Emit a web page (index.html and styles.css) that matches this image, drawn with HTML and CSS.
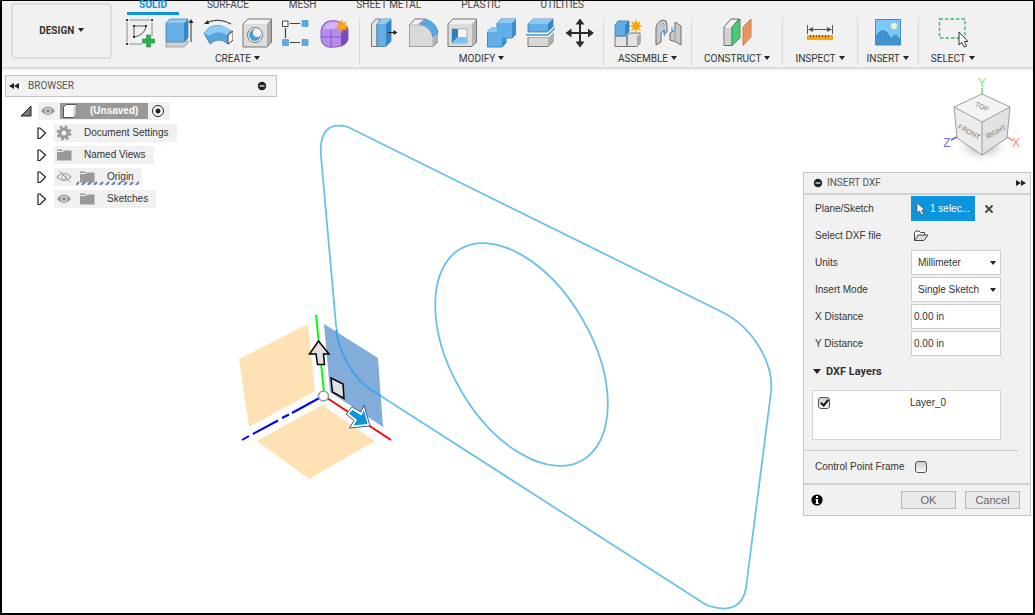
FILE: index.html
```html
<!DOCTYPE html>
<html lang="en">
<head>
    <meta charset="UTF-8">
    <meta name="viewport" content="width=device-width, initial-scale=1.0">
    <title>Insert DXF</title>
    <link rel="stylesheet" href="styles.css">
</head>
<body>
    <div class="app">
        <header class="ribbon">
            <button class="workspace-button">DESIGN <span class="caret"></span></button>
            <div class="ribbon-main">
                <nav class="tabs">
                    <a class="tab active" href="#">SOLID</a>
                    <a class="tab" href="#">SURFACE</a>
                    <a class="tab" href="#">MESH</a>
                    <a class="tab" href="#">SHEET METAL</a>
                    <a class="tab" href="#">PLASTIC</a>
                    <a class="tab" href="#">UTILITIES</a>
                </nav>
                <div class="groups">
                    <div class="group">
                        <div class="tools">
                            <!-- sketch -->
                            <button class="tool"><svg viewBox="0 0 30 30">
                                <path d="M4 2H25M4 26H17M2 4V24M27 4V18" stroke="#8a8a8a" fill="none"/>
                                <path d="M9 8H21M9 8V19M21 8Q20 17 9 19" stroke="#555" fill="none"/>
                                <path d="M1 1h2v2H1zM26 1h2v2h-2zM1 25h2v2H1zM8 7h2v2H8zM20 7h2v2h-2zM8 18h2v2H8z" fill="#333"/>
                                <path d="M21.5 17h4v4h4v4h-4v4h-4v-4h-4v-4h4z" fill="#25b04b" stroke="#159038" stroke-width=".6"/>
                            </svg></button>
                            <!-- extrude -->
                            <button class="tool"><svg viewBox="0 0 30 30">
                                <path d="M2 25L4 23H24V25L20 29H2z" fill="#cfcfcf" stroke="#888" stroke-width=".7"/>
                                <path d="M2 5L6 1H24L20 5z" fill="#8ecbf5"/>
                                <path d="M20 5L24 1V20L20 24z" fill="#3587c4"/>
                                <path d="M2 5H20V24H2z" fill="#65aee6"/>
                                <path d="M2 5L6 1H24V20L20 24H2z" fill="none" stroke="#4284b5" stroke-width=".8"/>
                                <path d="M27 4V24" stroke="#333"/><path d="M27 1l2.5 4h-5z" fill="#222"/>
                            </svg></button>
                            <!-- revolve -->
                            <button class="tool"><svg viewBox="0 0 30 30">
                                <path d="M3 5Q15 -1 28 6" stroke="#333" fill="none" stroke-width="1.2"/><path d="M1 6l4-4 1 4z" fill="#222"/>
                                <path d="M1 15L7 9Q16 5 25 11L30 14V22L25 26Q16 18 7 26z" fill="#57a5e0" stroke="#3f7ba8" stroke-width=".8"/>
                                <path d="M1 15L7 9Q16 5 28 12L24 17Q15 11 6 18z" fill="#8ecbf5"/>
                                <path d="M25 17L30 13V22L25 26z" fill="#fff" stroke="#444"/>
                            </svg></button>
                            <!-- hole -->
                            <button class="tool"><svg viewBox="0 0 30 30">
                                <path d="M1 6L6 1H29.5L25 6z" fill="#f2f2f2"/><path d="M25 6L29.5 1V24L25 29z" fill="#aaa"/>
                                <path d="M1 6H25V29H1z" fill="#dcdcdc"/>
                                <path d="M1 6L6 1H29.5V24L25 29H1z" fill="none" stroke="#777"/>
                                <circle cx="13" cy="17" r="7.5" fill="#f4f4f4" stroke="#777"/>
                                <circle cx="13" cy="17" r="5.5" fill="#4a9edb" stroke="#3f7ba8" stroke-width=".6"/>
                                <circle cx="15" cy="15" r="4" fill="#f4f4f4"/>
                            </svg></button>
                            <!-- pattern -->
                            <button class="tool"><svg viewBox="0 0 30 30">
                                <path d="M9 5.5H19M9 24.5H19M4.5 10V20" stroke="#444" stroke-width="1.2"/>
                                <path d="M1.5 3h5.500v5.500H1.500z" fill="#fff" stroke="#444"/>
                                <path d="M21 2.5h6v6h-6zM1.500 21.500h6v6h-6zM21 21.500h6v6h-6z" fill="#5aaae4" stroke="#3f8dc4" stroke-width=".6"/>
                            </svg></button>
                            <!-- form -->
                            <button class="tool"><svg viewBox="0 0 30 30">
                                <path d="M1 13Q1 8 5 5Q8 2 17 3Q25 5 28 11V21Q27 26 21 28Q8 31 4 27Q1 25 1 20z" fill="#b48ceb" stroke="#8458c0"/>
                                <path d="M21 12Q26 9 28 11V21Q27 26 21 28z" fill="#7a4cba"/>
                                <path d="M5 8Q8 3 17 4L20 9Q12 12 3 11z" fill="#d0b4f6"/>
                                <path d="M2 19H21L28 15M11 12V29" stroke="#7a4cb8" stroke-width=".8" fill="none"/>
                                <path d="M22 1l1.3 4 3.7-2-2 3.7 4 1.3-4 1.3 2 3.7-3.7-2-1.3 4-1.3-4-3.7 2 2-3.7-4-1.3 4-1.3-2-3.7 3.7 2z" fill="#f9a60a"/>
                            </svg></button>
                        </div>
                        <button class="group-label">CREATE<span class="caret"></span></button>
                    </div>
                    <div class="group">
                        <div class="tools">
                            <!-- press pull -->
                            <button class="tool"><svg viewBox="0 0 30 30">
                                <path d="M2.5 6L7 1H12L8 6V28.500H2.500z" fill="#e4e4e4" stroke="#777"/>
                                <path d="M8 6L13 1H22V23L17 28.500H8z" fill="#65aee6" stroke="#3f7ba8" stroke-width=".8"/>
                                <path d="M17 6L22 1V23L17 28z" fill="#3587c4"/><path d="M8 6L13 1H22L17 6z" fill="#8ecbf5"/>
                                <path d="M19 14.5H26" stroke="#222" stroke-width="1.2"/><path d="M28.5 14.500L24.500 12v5z" fill="#222"/>
                            </svg></button>
                            <!-- fillet -->
                            <button class="tool"><svg viewBox="0 0 30 30">
                                <path d="M1.5 7L7 1H17Q30 6 30 17V24L25 28.500H1.500z" fill="#f0f0f0" stroke="#777"/>
                                <path d="M1.5 7H11Q24 8 25 20V28.500H1.500z" fill="#d9d9d9" stroke="#999" stroke-width=".6"/>
                                <path d="M25 20L30 16V24L25 28.5z" fill="#b0b0b0"/>
                                <path d="M11 6L17 1Q29 4 29.5 16L25 19Q23 8 11 6z" fill="#57a8e4" stroke="#3f8dc4" stroke-width=".6"/>
                            </svg></button>
                            <!-- shell -->
                            <button class="tool"><svg viewBox="0 0 30 30">
                                <path d="M1 6L6 1H29.5V24L25 28.500H1z" fill="#f0f0f0"/><path d="M25 6L29.5 1V24L25 28.500z" fill="#b5b5b5"/>
                                <path d="M1 6H25V28.5H1z" fill="#dcdcdc"/><path d="M1 6L6 1H29.5V24L25 28.500H1z" fill="none" stroke="#777"/>
                                <path d="M5 11H20V25H5z" fill="#f7f7f7" stroke="#888" stroke-width=".6"/>
                                <path d="M5 11L11 11V19L5 25z" fill="#2f7fb8"/><path d="M5 25L11 19H20V25z" fill="#7cc4f5"/>
                            </svg></button>
                            <!-- combine -->
                            <button class="tool"><svg viewBox="0 0 30 30">
                                <path d="M1.5 14L5 10H11V5L15 1H30V16L26 20H20V25L16 29H1.500z" fill="#62aee8" stroke="#3f8dc4"/>
                                <path d="M26 5L30 1V16L26 20zM16 20H20V25L16 29V20z" fill="#3a8fd0"/>
                                <path d="M11 5L15 1H30L26 5zM1.5 14L5 10H11V14z" fill="#8acaf5"/>
                            </svg></button>
                            <!-- split -->
                            <button class="tool"><svg viewBox="0 0 30 30">
                                <path d="M3 19H23L28 14V24L23 28.5H3z" fill="#d8d8d8" stroke="#777"/><path d="M23 20L28 15V24L23 28z" fill="#b0b0b0"/>
                                <path d="M3 6L8 1H28V10L23 14H3z" fill="#62aee8" stroke="#3f7ba8" stroke-width=".8"/>
                                <path d="M3 6L8 1H28L23 6z" fill="#8acaf5"/><path d="M23 6L28 1V10L23 14z" fill="#3587c4"/>
                                <path d="M1 17H23L30 10" stroke="#fff" stroke-width="4" fill="none"/><path d="M1 17H23L30 10" stroke="#3a95d8" stroke-width="1.5" fill="none"/>
                            </svg></button>
                            <!-- move -->
                            <button class="tool"><svg viewBox="0 0 30 30">
                                <path d="M16 4V26M5 15H27" stroke="#2b2b2b" stroke-width="2"/>
                                <path d="M16 .5l4.500 6h-9zM16 29.500l4.500-6h-9zM1.500 15l6-4.500v9zM30 15l-6-4.500v9z" fill="#2b2b2b"/>
                            </svg></button>
                        </div>
                        <button class="group-label">MODIFY<span class="caret"></span></button>
                    </div>
                    <div class="group">
                        <div class="tools">
                            <!-- new component -->
                            <button class="tool"><svg viewBox="0 0 30 30">
                                <path d="M2 18H14V28.5H2zM14 18L17 15H27V25L24 28.500H14z" fill="#e2e2e2" stroke="#777"/>
                                <path d="M24 19L27 16V25L24 28z" fill="#aaa"/>
                                <path d="M2 7L5 3H16V14L12 18H2z" fill="#5fade8" stroke="#3f7ba8" stroke-width=".8"/><path d="M12 7L16 3V14L12 18z" fill="#3587c4"/>
                                <path d="M23 1l1.3 4 3.7-2-2 3.7 4 1.3-4 1.3 2 3.7-3.7-2-1.3 4-1.3-4-3.7 2 2-3.7-4-1.3 4-1.3-2-3.7 3.7 2z" fill="#f9a60a"/>
                            </svg></button>
                            <!-- joint -->
                            <button class="tool"><svg viewBox="0 0 30 30">
                                <path d="M4 9Q6 3 11 2Q15 2 15 6V14L12 16V12L9 15V24L4 27z" fill="#c9c9c9" stroke="#6d6d6d"/>
                                <circle cx="11" cy="6.5" r="1.2" fill="#f1f1f1" stroke="#777" stroke-width=".6"/>
                                <path d="M18 15L23 12V4L29 8V27L24 24L18 22z" fill="#c9c9c9" stroke="#6d6d6d"/><path d="M23 12V23" stroke="#999"/>
                                <path d="M12.5 12V18M20 9V14" stroke="#3ba0e8" stroke-width="1.2"/>
                            </svg></button>
                        </div>
                        <button class="group-label">ASSEMBLE<span class="caret"></span></button>
                    </div>
                    <div class="group single">
                        <div class="tools">
                            <!-- offset plane -->
                            <button class="tool"><svg viewBox="0 0 30 30">
                                <path d="M2 9L9 1H17L10 9V27.5H2z" fill="#f4f4f4" stroke="#666"/><path d="M3 9.5H9V27H3z" fill="#d2d2d2"/>
                                <path d="M10 9L18 1V20L10 27.5z" fill="#52c77c" stroke="#2d9e55"/>
                                <path d="M21 9L29 1V19L21 27.5z" fill="#e8945a" stroke="#c88050"/>
                            </svg></button>
                        </div>
                        <button class="group-label">CONSTRUCT<span class="caret"></span></button>
                    </div>
                    <div class="group single">
                        <div class="tools">
                            <!-- measure -->
                            <button class="tool"><svg viewBox="0 0 30 30">
                                <path d="M2.5 7V16M27.500 7V16M4 11.500H26" stroke="#555"/><path d="M3 11.5l5-2.500v5zM27 11.500l-5-2.500v5z" fill="#555"/>
                                <path d="M2 17H28V22H2z" fill="#fba70c"/><path d="M5.5 17v2M8.500 17v3M11.500 17v2M14.500 17v3M17.500 17v2M20.500 17v3M23.500 17v2" stroke="#7a5515"/>
                            </svg></button>
                        </div>
                        <button class="group-label">INSPECT<span class="caret"></span></button>
                    </div>
                    <div class="group">
                        <div class="tools">
                            <!-- image -->
                            <button class="tool"><svg viewBox="0 0 30 30">
                                <path d="M2.5 1.500H27.500V27H2.500z" fill="#7cc8fa"/>
                                <path d="M2.5 18Q6 12 10 12Q14 12 18 20Q22 14 25 18L27.500 22V27H2.500z" fill="#3f93cf"/>
                                <circle cx="21" cy="8" r="3" fill="#fdf3c0"/><path d="M2.5 1.500H27.500V27H2.500z" fill="none" stroke="#3f8dc4"/>
                            </svg></button>
                        </div>
                        <button class="group-label">INSERT<span class="caret"></span></button>
                    </div>
                    <div class="group single">
                        <div class="tools">
                            <!-- window select -->
                            <button class="tool"><svg viewBox="0 0 30 30">
                                <path d="M1.5 1H27V20H1.500z" fill="none" stroke="#3dba63" stroke-width="1.4" stroke-dasharray="3.5 2"/>
                                <path d="M21 14V27L24 24.5L26 29L28.500 28L26.500 23.500H30z" fill="#fff" stroke="#333"/>
                            </svg></button>
                        </div>
                        <button class="group-label">SELECT<span class="caret"></span></button>
                    </div>
                </div>
            </div>
        </header>

        <main class="workspace">
            <svg class="canvas" width="1031" height="542" viewBox="2 71 1031 542">
                <!-- origin planes -->
                <path d="M239 359L308 324L315 391L249 427zM257 441L322 405L375 441L309 479z" fill="#fee2b3"/>
                <path d="M324 324L378 358L383 427L330 392z" fill="#82add8"/>
                <!-- dxf outline -->
                <g fill="none" stroke="#6cc1e9" stroke-width="1.8">
                    <path d="M321 156C319 131 329 122 348 127L722 312C754 328 774 364 771 392L746 588C743 605 732 613 709 606Q704 604 694 597L373 391C351 378 339 350 336 325z"/>
                    <ellipse cx="521.5" cy="354.5" rx="122" ry="70.5" transform="rotate(60 521.5 354.5)"/>
                </g>
                <path d="M336 330C339 350 351 378 373 391L381 396" fill="none" stroke="#3f9fec" stroke-width="1.8"/>
                <!-- axes -->
                <g fill="none" stroke-width="2">
                    <path d="M316 315L324 392" stroke="#0f0"/>
                    <path d="M324 396L391 440" stroke="#f00"/>
                    <path d="M323 396L292 413M289 414.5L282 418M278 420.5L253 434M249 436L242 440" stroke="#00f"/>
                </g>
                <path d="M318.5 341L329 354H323.5L324.5 364.5H317.5L316 354H309.500z" fill="#e0e0e0" stroke="#000" stroke-width="1.5"/>
                <path d="M331 378L343 384L344 398.5L332.5 392z" fill="#e0e0e0" stroke="#000" stroke-width="1.5"/>
                <path d="M346 414L352 407L361 412L364 405L370 426L349.5 428L354 420.5z" fill="#fff" stroke="#3f5f88"/>
                <path d="M349 413.5L352.5 410L361.5 415.5L364 410L367.5 424L353.5 425.5L357 420z" fill="#0c94dc"/>
                <circle cx="323.5" cy="396" r="5" fill="#fff" stroke="#999" stroke-width="1.5"/>
            </svg>

            <section class="browser">
                <div class="browser-header">
                    <svg class="icon-small" viewBox="0 0 10 10"><path d="M5 2v6L0 5zM10 2v6L5 5z" fill="#222"/></svg>
                    <span class="panel-title">BROWSER</span>
                    <svg class="icon-small" viewBox="0 0 10 10"><circle cx="5" cy="5" r="4.2" fill="#222"/><path d="M2.5 5h5" stroke="#fff" stroke-width="1.2"/></svg>
                </div>
                <div class="tree">
                    <div class="tree-row root">
                        <svg class="arrow" viewBox="0 0 12 12"><path d="M1 11L11 1V11z" fill="#777" stroke="#222"/></svg>
                        <div class="chip">
                            <svg class="icon" viewBox="0 0 16 16"><use href="#eye"/></svg>
                            <span class="selected">
                                <svg class="icon" viewBox="0 0 16 16"><path d="M1.5 4L4 1.500H14.500V11L11.500 14.500H1.500z" fill="#fff" stroke="#555"/><path d="M11.5 4.500L14.500 1.500V11L11.500 14.500z" fill="#ccc"/></svg>
                                (Unsaved)
                            </span>
                            <input class="activate" type="radio" aria-label="Activate" checked>
                        </div>
                    </div>
                    <div class="tree-row">
                        <svg class="arrow" viewBox="0 0 12 12"><use href="#expand"/></svg>
                        <div class="chip">
                            <svg class="icon" viewBox="0 0 16 16"><circle cx="8" cy="8" r="4" fill="none" stroke="#999" stroke-width="3"/><circle cx="8" cy="8" r="6.2" fill="none" stroke="#999" stroke-width="2.5" stroke-dasharray="2.6 2.27"/></svg>
                            <span class="name">Document Settings</span>
                        </div>
                    </div>
                    <div class="tree-row">
                        <svg class="arrow" viewBox="0 0 12 12"><use href="#expand"/></svg>
                        <div class="chip">
                            <svg class="icon" viewBox="0 0 16 16"><use href="#folder"/></svg>
                            <span class="name">Named Views</span>
                        </div>
                    </div>
                    <div class="tree-row">
                        <svg class="arrow" viewBox="0 0 12 12"><use href="#expand"/></svg>
                        <div class="chip origin">
                            <svg class="icon" viewBox="0 0 16 16"><path d="M1 8Q8 0 15 8Q8 15 1 8z" fill="none" stroke="#aaa" stroke-width="1.2"/><circle cx="8" cy="8" r="2.5" fill="none" stroke="#aaa"/><path d="M3 2L14 13" stroke="#999"/></svg>
                            <svg class="icon" viewBox="0 0 16 16"><use href="#folder"/></svg>
                            <span class="name">Origin</span>
                            <svg class="hatch" viewBox="0 0 64 4"><path d="M0 4l3-3M6 4l3-3M12 4l3-3M18 4l3-3M24 4l3-3M30 4l3-3M36 4l3-3M42 4l3-3M48 4l3-3M54 4l3-3M60 4l3-3" stroke="#5f7fb0" stroke-width="1.8"/></svg>
                        </div>
                    </div>
                    <div class="tree-row">
                        <svg class="arrow" viewBox="0 0 12 12"><use href="#expand"/></svg>
                        <div class="chip">
                            <svg class="icon" viewBox="0 0 16 16"><use href="#eye"/></svg>
                            <svg class="icon" viewBox="0 0 16 16"><use href="#folder"/></svg>
                            <span class="name">Sketches</span>
                        </div>
                    </div>
                </div>
            </section>

            <div class="side">
                <svg class="viewcube" viewBox="931 71 100 101">
                    <defs><radialGradient id="shade"><stop offset="0" stop-color="#999"/><stop offset="1" stop-color="#fff" stop-opacity="0"/></radialGradient></defs>
                    <ellipse cx="982" cy="147" rx="29" ry="16" fill="url(#shade)"/>
                    <path d="M982 94V88" stroke="#5ee65e" stroke-width="1.5"/>
                    <path d="M957 137L951 140" stroke="#5a5af0" stroke-width="1.5"/>
                    <path d="M1007 137L1013 141" stroke="#f08080" stroke-width="1.5"/>
                    <path d="M982 94L1010 107L982 122L954 107z" fill="#f3f3f3"/>
                    <path d="M954 107L982 122V155L957 138z" fill="#ececec"/>
                    <path d="M1010 107L982 122V155L1007 138z" fill="#e2e2e2"/>
                    <path d="M982 94L1010 107L1007 138L982 155L957 138L954 107zM954 107L982 122L1010 107M982 122V155" fill="none" stroke="#888" stroke-width=".8"/>
                    <text class="axis" x="982" y="87" fill="#7be87b">Y</text>
                    <text class="axis" x="947" y="147" fill="#7070f0">Z</text>
                    <text class="axis" x="1016" y="147" fill="#f28a8a">X</text>
                    <text class="face" transform="translate(981 109) rotate(24)">TOP</text>
                    <text class="face" transform="translate(968 134) rotate(28)">FRONT</text>
                    <text class="face" transform="translate(997 134) rotate(-28)">RIGHT</text>
                </svg>

                <form class="dialog">
                    <div class="dialog-header">
                        <svg class="icon-small" viewBox="0 0 10 10"><circle cx="5" cy="5" r="4.2" fill="#222"/><path d="M2.5 5h5" stroke="#fff" stroke-width="1.2"/></svg>
                        <span class="panel-title">INSERT DXF</span>
                        <svg class="icon-small" viewBox="0 0 10 10"><path d="M0 2v6l5-3zM5 2v6l5-3z" fill="#222"/></svg>
                    </div>
                    <div class="fields">
                        <div class="field">
                            <label for="plane">Plane/Sketch</label>
                            <button type="button" id="plane" class="select-plane">
                                <svg viewBox="0 0 10 14"><path d="M1 1V11L3.5 9L5.500 13L7.500 12L5.500 8H9z" fill="#fff" stroke="#555" stroke-width=".8"/></svg>
                                1 selec...
                            </button>
                            <button type="button" class="clear" aria-label="Clear"><svg viewBox="0 0 10 10"><path d="M1.5 1.500l7 7M8.500 1.500l-7 7" stroke="#444" stroke-width="1.8"/></svg></button>
                        </div>
                        <div class="field">
                            <label for="file">Select DXF file</label>
                            <button type="button" id="file" class="open-file"><svg viewBox="0 0 16 12"><path d="M1.5 10.500V2.500L3 1H6L7.500 2.500H11.500V5" fill="#fff" stroke="#444"/><path d="M1.5 10.500L5 5H15L11 10.500z" fill="#ddd" stroke="#444"/></svg></button>
                        </div>
                        <div class="field">
                            <label for="units">Units</label>
                            <span class="dropdown"><select id="units"><option>Millimeter</option></select></span>
                        </div>
                        <div class="field">
                            <label for="mode">Insert Mode</label>
                            <span class="dropdown"><select id="mode"><option>Single Sketch</option></select></span>
                        </div>
                        <div class="field">
                            <label for="x-distance">X Distance</label>
                            <input type="text" id="x-distance" value="0.00 in">
                        </div>
                        <div class="field">
                            <label for="y-distance">Y Distance</label>
                            <input type="text" id="y-distance" value="0.00 in">
                        </div>
                    </div>
                    <h2><span class="caret"></span>DXF Layers</h2>
                    <div class="layers">
                        <input type="checkbox" id="layer0" checked>
                        <label for="layer0">Layer_0</label>
                    </div>
                    <div class="frame-row">
                        <label for="frame">Control Point Frame</label>
                        <input type="checkbox" id="frame">
                    </div>
                    <div class="dialog-footer">
                        <svg class="info" viewBox="0 0 12 12"><circle cx="6" cy="6" r="5.6" fill="#000"/><path d="M5 2h2v2H5zM4.5 5H7v4h1v1H4.500V9H5V6h-.5z" fill="#fff"/></svg>
                        <button type="button">OK</button>
                        <button type="button">Cancel</button>
                    </div>
                </form>
            </div>
        </main>
    </div>

    <svg class="symbols" width="0" height="0">
        <symbol id="eye" viewBox="0 0 16 16"><path d="M1 8Q8 -1 15 8Q8 16 1 8z" fill="#999"/><circle cx="8" cy="8" r="3" fill="#f1f1f1"/><circle cx="8" cy="8" r="2" fill="#888"/></symbol>
        <symbol id="folder" viewBox="0 0 16 16"><path d="M1 2.5H6L7 4H1zM1 5H7L8 3.500H15.500V13.500H1z" fill="#999"/></symbol>
        <symbol id="expand" viewBox="0 0 12 12"><path d="M2 1H4L9.5 6L4 11.500H2z" fill="#fff" stroke="#222" stroke-width="1.2"/></symbol>
    </svg>
</body>
</html>
```

FILE: styles.css
```css
* {
    box-sizing: border-box;
}
body {
    margin: 0;
    font-family: 'Liberation Sans', Arial, sans-serif;
    font-size: 10px;
    line-height: 12px;
    color: #333;
    background: #fff;
}
button, input, select {
    font: inherit;
    color: inherit;
    margin: 0;
}
button {
    padding: 0;
    border: none;
    background: none;
    cursor: pointer;
}
svg {
    display: block;
    flex-shrink: 0;
}
.app {
    display: flex;
    flex-direction: column;
    min-height: 100vh;
    border: 2px solid #000;
    border-top-width: 1px;
}
.symbols {
    position: absolute;
}
.caret {
    display: inline-block;
    border: 3px solid transparent;
    border-top: 4px solid #222;
    border-bottom: none;
    margin-left: 3px;
    vertical-align: 2px;
}

/* ribbon */
.ribbon {
    display: flex;
    gap: 13px;
    padding: 0 9px 2px;
    background: #f1f1f1;
    border-bottom: 2px solid #dedede;
    box-shadow: 0 2px 0 #f5f5f5;
    margin-bottom: 2px;
    font-family: Roboto, sans-serif;
}
.workspace-button {
    width: 101px;
    height: 56px;
    margin-top: 2px;
    border: 2px solid #dcdcdc;
    border-radius: 4px;
    font-weight: bold;
    flex-shrink: 0;
}
.workspace-button .caret {
    margin-left: 1px;
}
.tabs {
    display: flex;
    gap: 16px;
    height: 14px;
    margin-left: 2px;
    line-height: 7px;
}
.tab {
    padding: 0 12px;
    color: #444;
    text-decoration: none;
    white-space: nowrap;
}
.tab.active {
    color: #0c94dc;
    font-weight: bold;
    border-bottom: 3px solid #0c94dc;
}
.groups {
    display: flex;
    padding-top: 3px;
}
.group {
    display: flex;
    flex-direction: column;
    align-items: center;
    gap: 5px;
    padding: 0 9px;
    border-right: 1px solid #d8d8d8;
}
.group.single {
    padding: 0 12px;
}
.group:first-child {
    padding-left: 0;
}
.group:last-child {
    border-right: none;
}
.tools {
    display: flex;
    gap: 9px;
}
.tool, .tool svg {
    width: 30px;
    height: 30px;
}
.group-label {
    white-space: nowrap;
}

/* canvas */
.workspace {
    position: relative;
    flex: 1;
    display: flex;
    justify-content: space-between;
    align-items: flex-start;
}
.canvas {
    position: absolute;
    top: 0;
    left: 0;
}
.panel-title {
    flex: 1;
    font-family: Roboto, sans-serif;
    color: #555;
}
.icon-small {
    width: 10px;
    height: 10px;
}

/* browser */
.browser {
    position: relative;
    width: 272px;
    margin: 4px 0 0 3px;
}
.browser-header {
    display: flex;
    align-items: center;
    gap: 9px;
    height: 22px;
    padding: 0 9px 0 3px;
    background: #f2f2f2;
    border: 1px solid #c4c4c4;
}
.tree {
    padding-top: 3px;
}
.tree-row {
    display: flex;
    align-items: center;
    gap: 6px;
    height: 22px;
    padding-left: 31px;
}
.tree-row.root {
    padding-left: 15px;
}
.arrow {
    width: 12px;
    height: 12px;
}
.chip {
    position: relative;
    display: flex;
    align-items: center;
    gap: 7px;
    height: 18px;
    padding: 0 8px 0 2px;
    background: #f1f1f1;
}
.root .chip {
    gap: 4px;
    padding-right: 6px;
}
.icon {
    width: 16px;
    height: 16px;
}
.name {
    padding-left: 5px;
}
.selected {
    display: flex;
    align-items: center;
    gap: 12px;
    height: 16px;
    padding: 0 10px 0 2px;
    background: #999;
    color: #fff;
    font-weight: bold;
}
.activate {
    appearance: none;
    width: 12px;
    height: 12px;
    border: 1px solid #222;
    border-radius: 50%;
    background: radial-gradient(circle, #222 2px, #fff 3px);
}
.hatch {
    position: absolute;
    left: 22px;
    bottom: 1px;
    width: 64px;
    height: 4px;
}

/* dialog */
.side {
    position: relative;
    display: flex;
    flex-direction: column;
    align-items: flex-end;
    width: 228px;
    margin-right: 2px;
}
.viewcube {
    width: 100px;
    height: 101px;
}
.axis {
    font-size: 12px;
    text-anchor: middle;
}
.face {
    font-size: 7px;
    fill: #777;
    text-anchor: middle;
}
.dialog {
    width: 100%;
    background: #f1f1f1;
    border: 1px solid #c8c8c8;
}
.dialog-header {
    display: flex;
    align-items: center;
    gap: 4px;
    height: 22px;
    padding: 0 4px 0 9px;
    border-bottom: 2px solid #d2d2d2;
}
.fields {
    padding-left: 11px;
}
.field {
    display: flex;
    align-items: center;
    height: 27px;
}
.field label {
    width: 96px;
}
.field input, .field select {
    width: 90px;
    height: 25px;
    padding: 0 2px;
    border: 1px solid #ccc;
    border-radius: 0;
    background: #fff;
}
.field select {
    appearance: none;
    padding: 0 6px;
}
.dropdown {
    position: relative;
}
.dropdown::after {
    content: '';
    position: absolute;
    right: 5px;
    top: 11px;
    border: 3px solid transparent;
    border-top: 4px solid #222;
    border-bottom: none;
    pointer-events: none;
}
.select-plane {
    display: flex;
    align-items: center;
    justify-content: center;
    gap: 4px;
    width: 64px;
    height: 25px;
    background: #0c94dc;
    color: #fff;
}
.select-plane svg {
    width: 10px;
    height: 14px;
}
.clear {
    margin-left: 9px;
}
.clear svg {
    width: 10px;
    height: 10px;
}
.open-file {
    margin-left: 2px;
}
.open-file svg {
    width: 16px;
    height: 12px;
}
.dialog h2 {
    margin: 0;
    padding: 8px 9px 6px;
    font-family: Roboto, sans-serif;
    font-size: 11px;
    line-height: 14px;
}
.dialog h2 .caret {
    margin: 0 5px 0 0;
    border-width: 5px 4px 0;
    vertical-align: 1px;
}
.layers {
    display: flex;
    align-items: flex-start;
    gap: 80px;
    height: 50px;
    margin: 5px 29px 0 8px;
    padding: 6px 5px;
    background: #fff;
    border: 1px solid #d2d2d2;
}
.frame-row {
    display: flex;
    align-items: center;
    height: 33px;
    margin: 10px 12px 0 1px;
    padding-left: 10px;
    border-top: 1px solid #c8c8c8;
}
.frame-row label {
    width: 100px;
}
input[type="checkbox"] {
    appearance: none;
    width: 12px;
    height: 12px;
    border: 1px solid #555;
    border-radius: 3px;
    background: linear-gradient(#ccc, #f8f8f8);
}
input[type="checkbox"]:checked::after {
    content: '';
    display: block;
    width: 3px;
    height: 6px;
    margin: 0 0 0 3px;
    border: solid #111;
    border-width: 0 2px 2px 0;
    box-sizing: content-box;
    transform: rotate(40deg);
}
.dialog-footer {
    display: flex;
    align-items: center;
    gap: 9px;
    height: 32px;
    padding: 0 10px 0 7px;
    border-top: 2px solid #d2d2d2;
    font-size: 11px;
}
.info {
    width: 12px;
    height: 12px;
    margin-right: auto;
}
.dialog-footer button {
    width: 55px;
    height: 18px;
    border: 1px solid #b8b8b8;
    background: #e9e9e9;
    color: #666;
}
```
